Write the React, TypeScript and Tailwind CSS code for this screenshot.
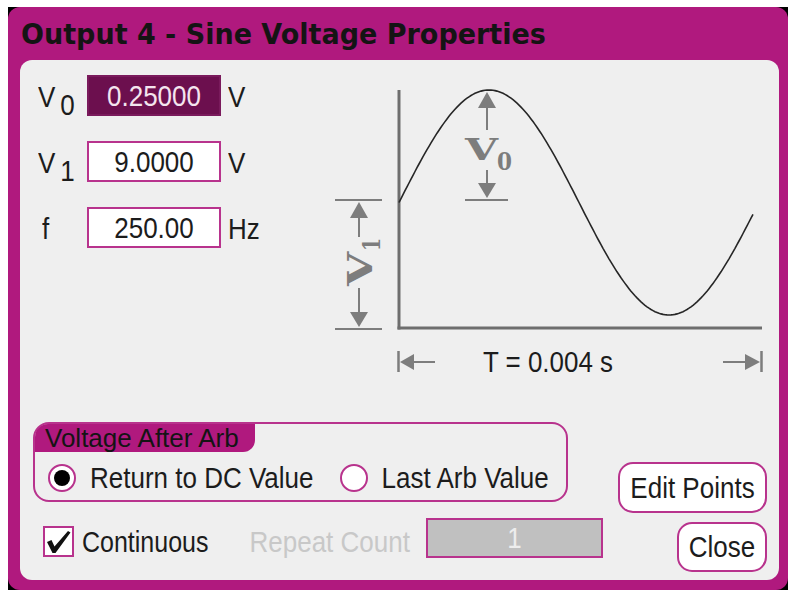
import React from "react";

function T({ children, className = "" }: { children: React.ReactNode; className?: string }) {
  return <span className={"inline-block scale-y-[1.15] whitespace-nowrap " + className}>{children}</span>;
}

function Row({
  main,
  sub,
  value,
  unit,
  filled,
  labelClass = "",
}: {
  main: string;
  sub?: string;
  value: string;
  unit: string;
  filled?: boolean;
  labelClass?: string;
}) {
  return (
    <div className="flex items-center h-[41px]">
      <div className="w-[49px] shrink-0 flex items-center">
        <T className={"relative top-[1px] " + labelClass}>{main}</T>
        {sub ? <T className="ml-[5px] relative top-[9px]">{sub}</T> : null}
      </div>
      {filled ? (
        <div className="w-[134px] h-[41px] shrink-0 bg-[#6c0f4e] border-2 border-[#7a1a5c] flex items-center justify-center text-[#f4e4ee]">
          <T>{value}</T>
        </div>
      ) : (
        <div className="w-[134px] h-[41px] shrink-0 bg-white border-2 border-[#b8338d] flex items-center justify-center">
          <T>{value}</T>
        </div>
      )}
      <T className="ml-[7px] relative top-[1px]">{unit}</T>
    </div>
  );
}

function Radio({ on, className = "" }: { on?: boolean; className?: string }) {
  return (
    <div
      className={
        "w-[28px] h-[28px] shrink-0 rounded-full border-2 border-[#b8338d] bg-white flex items-center justify-center " +
        className
      }
    >
      {on ? <div className="w-[16px] h-[16px] rounded-full bg-black" /> : null}
    </div>
  );
}

function Chart() {
  const pts: string[] = [];
  for (let x = 399; x <= 753; x += 2) {
    const y = 202.5 - 112.5 * Math.sin((2 * Math.PI * (x - 399)) / 360);
    pts.push(`${x},${y.toFixed(1)}`);
  }
  const d = "M" + pts.join(" L");
  const g = "#7d7d7d";
  return (
    <svg className="mt-[25px] w-[440px] h-[300px] shrink-0" viewBox="330 85 440 300">
      {/* axes */}
      <line x1="399" y1="90" x2="399" y2="329.5" stroke="#6e6e6e" strokeWidth="3" />
      <line x1="397.5" y1="328" x2="762" y2="328" stroke="#6e6e6e" strokeWidth="3" />
      {/* sine */}
      <path d={d} fill="none" stroke="#262626" strokeWidth="1.6" strokeLinejoin="round" />
      {/* V0 dimension */}
      <polygon points="487,92 478,108 496,108" fill={g} />
      <line x1="487" y1="107" x2="487" y2="130" stroke={g} strokeWidth="2" />
      <line x1="487" y1="170" x2="487" y2="184" stroke={g} strokeWidth="2" />
      <polygon points="478,183 496,183 487,198" fill={g} />
      <line x1="465" y1="200" x2="508" y2="200" stroke={g} strokeWidth="2" />
      <text
        x="465"
        y="160"
        fontFamily="DejaVu Serif, serif"
        fontWeight="bold"
        fontSize="30"
        textLength="33"
        lengthAdjust="spacingAndGlyphs"
        fill={g}
      >
        V
      </text>
      <text
        x="497"
        y="170"
        fontFamily="DejaVu Serif, serif"
        fontWeight="bold"
        fontSize="24"
        textLength="15"
        lengthAdjust="spacingAndGlyphs"
        fill={g}
      >
        0
      </text>
      {/* V1 dimension */}
      <line x1="335" y1="200" x2="382" y2="200" stroke={g} strokeWidth="2" />
      <line x1="335" y1="329" x2="382" y2="329" stroke={g} strokeWidth="2" />
      <polygon points="359,202 350,218 368,218" fill={g} />
      <line x1="359" y1="217" x2="359" y2="237" stroke={g} strokeWidth="2" />
      <line x1="359" y1="288" x2="359" y2="313" stroke={g} strokeWidth="2" />
      <polygon points="350,312 368,312 359,327" fill={g} />
      <g transform="translate(372,286) rotate(-90)">
        <text
          x="0"
          y="0"
          fontFamily="DejaVu Serif, serif"
          fontWeight="bold"
          fontSize="33"
          textLength="34"
          lengthAdjust="spacingAndGlyphs"
          fill={g}
        >
          V
        </text>
        <text
          x="35"
          y="8"
          fontFamily="DejaVu Serif, serif"
          fontWeight="bold"
          fontSize="24"
          textLength="13"
          lengthAdjust="spacingAndGlyphs"
          fill={g}
        >
          1
        </text>
      </g>
      {/* period arrows */}
      <line x1="398.5" y1="351" x2="398.5" y2="372" stroke={g} strokeWidth="2.5" />
      <polygon points="400,362 414,354 414,370" fill={g} />
      <line x1="413" y1="362" x2="435" y2="362" stroke={g} strokeWidth="2" />
      <line x1="723" y1="362" x2="746" y2="362" stroke={g} strokeWidth="2" />
      <polygon points="745,354 745,370 760,362" fill={g} />
      <line x1="761.5" y1="351" x2="761.5" y2="372" stroke={g} strokeWidth="2.5" />
      <text
        x="483"
        y="372"
        fontFamily="Liberation Sans, Arial, sans-serif"
        fontSize="29"
        textLength="130"
        lengthAdjust="spacingAndGlyphs"
        fill="#1c1c1c"
      >
        T = 0.004 s
      </text>
    </svg>
  );
}

export default function App() {
  return (
    <div className="w-[800px] h-[605px] bg-white pt-[7px] pl-[8px] font-['Liberation_Sans',Arial,sans-serif] text-[26px] leading-none text-[#1c1c1c]">
      <div className="w-[780px] h-[583px] bg-black">
        <div className="h-full rounded-[12px] bg-[#b0197e] flex flex-col">
          <div className="h-[53px] shrink-0 pl-[13px] flex items-center">
            <span className="inline-block scale-y-[1.07] whitespace-nowrap font-['DejaVu_Sans',sans-serif] font-bold text-[27px] text-[#141414]">
              Output 4 - Sine Voltage Properties
            </span>
          </div>
          <div className="flex-1 ml-[12px] mr-[9px] mb-[10px] rounded-[12px] bg-[#efefef] flex flex-col">
            <div className="h-[362px] shrink-0 flex">
              <div className="w-[310px] shrink-0 pl-[18px] pt-[15px] flex flex-col gap-[25px]">
                <Row main="V" sub="0" value="0.25000" unit="V" filled />
                <Row main="V" sub="1" value="9.0000" unit="V" />
                <Row main="f" value="250.00" unit="Hz" labelClass="ml-[4px]" />
              </div>
              <Chart />
            </div>
            <div className="flex pl-[13px]">
              <div className="w-[572px] shrink-0">
                <div className="w-[535px] h-[80px] border-2 border-[#b8338d] rounded-[16px]">
                  <div className="w-[220px] h-[28px] bg-[#b0197e] rounded-tl-[13px] rounded-br-[12px] pl-[10px] flex items-center">
                    <span className="whitespace-nowrap text-[#141414]">Voltage After Arb</span>
                  </div>
                  <div className="mt-[12px] pl-[13px] flex items-center h-[28px]">
                    <Radio on />
                    <T className="ml-[14px]">Return to DC Value</T>
                    <Radio className="ml-[26px]" />
                    <T className="ml-[14px]">Last Arb Value</T>
                  </div>
                </div>
                <div className="mt-[16px] h-[40px] pl-[10px] flex items-center">
                  <div className="w-[31px] h-[31px] shrink-0 relative top-[3px] border-2 border-[#b8338d] bg-white">
                    <svg viewBox="0 0 27 27" className="w-[27px] h-[27px]">
                      <polygon points="2,14 6.5,12 9.5,18.5 23,3 25.5,4.5 10.5,25 7.5,25" fill="#111" />
                    </svg>
                  </div>
                  <T className="ml-[8px] relative top-[4px] text-[25px]">Continuous</T>
                  <T className="ml-[41px] relative top-[4px] text-[#c8c8c8]">Repeat Count</T>
                  <div className="ml-[16px] w-[177px] h-[40px] shrink-0 bg-[#c0c0c0] border-2 border-[#b8338d] flex items-center justify-center">
                    <T className="text-[#ededed]">1</T>
                  </div>
                </div>
              </div>
              <div className="ml-[13px] mt-[40px] flex flex-col items-end gap-[9px]">
                <div className="w-[149px] h-[51px] bg-white border-2 border-[#b8338d] rounded-[15px] flex items-center justify-center">
                  <T>Edit Points</T>
                </div>
                <div className="w-[90px] h-[50px] bg-white border-2 border-[#b8338d] rounded-[15px] flex items-center justify-center">
                  <T>Close</T>
                </div>
              </div>
            </div>
          </div>
        </div>
      </div>
    </div>
  );
}
